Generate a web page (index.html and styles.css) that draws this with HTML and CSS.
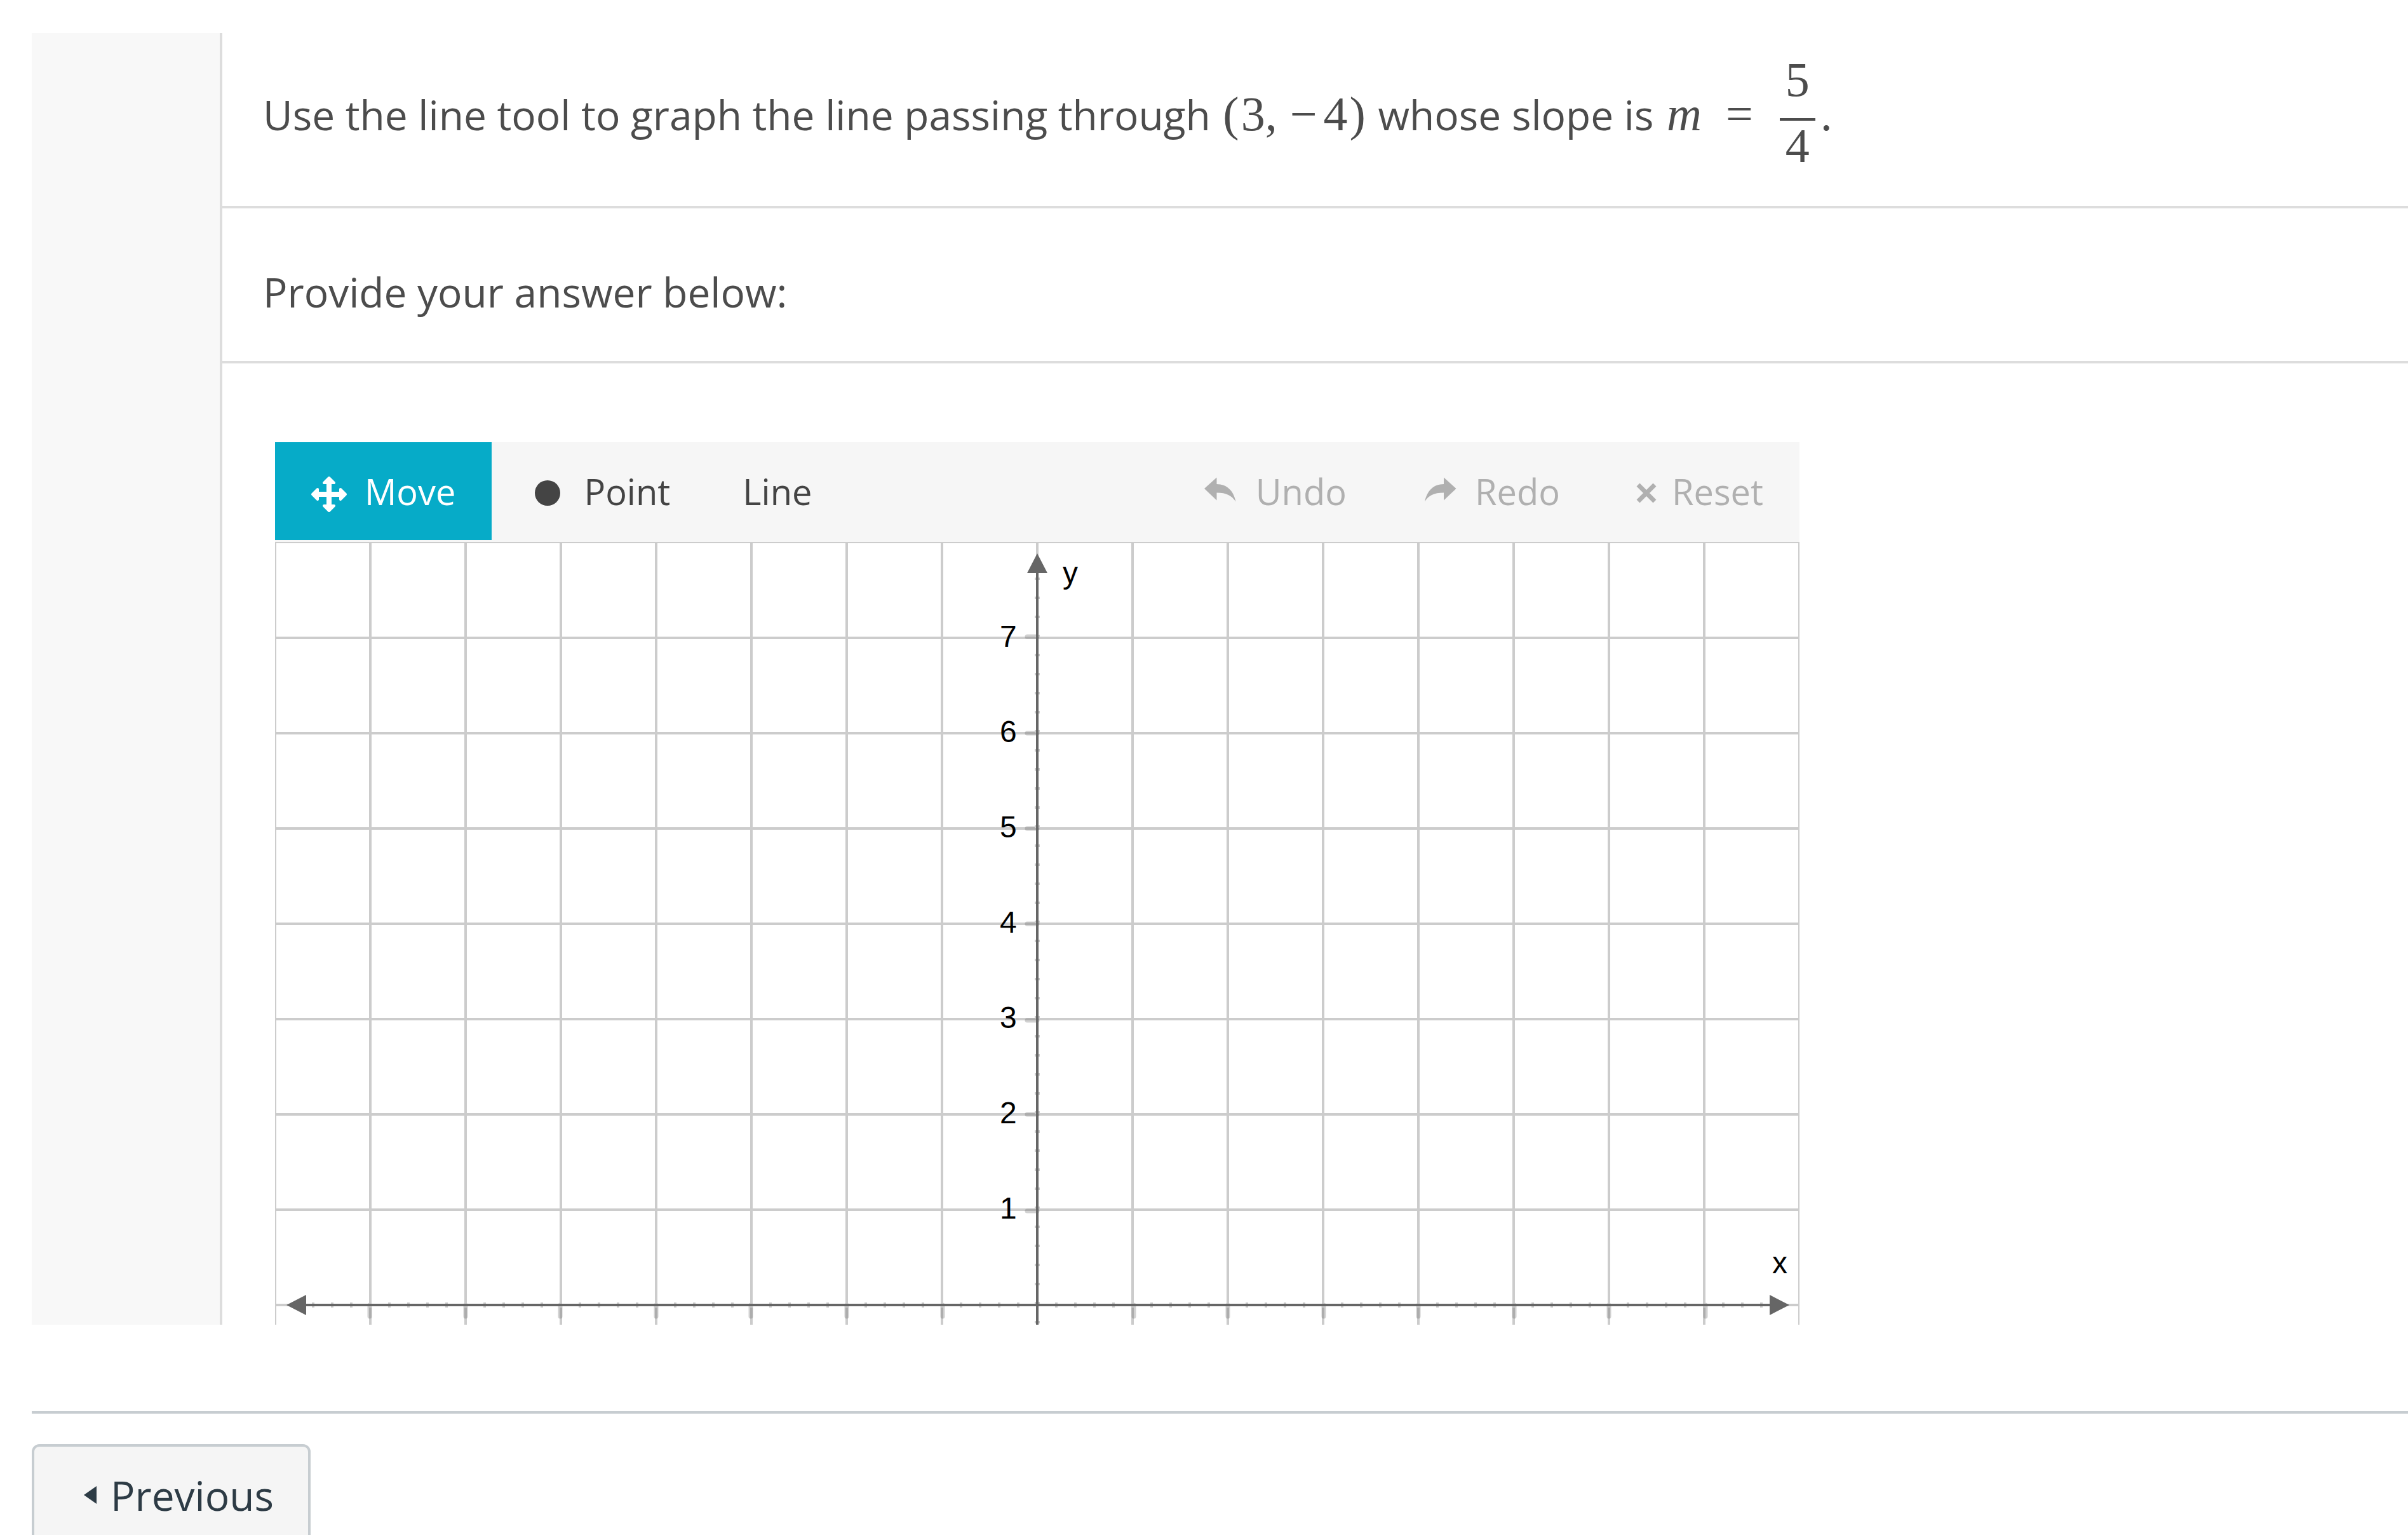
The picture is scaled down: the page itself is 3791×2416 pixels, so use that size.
FILE: index.html
```html
<!DOCTYPE html>
<html lang="en">
<head>
<meta charset="utf-8">
<title>Graph a line</title>
<link rel="stylesheet" href="styles.css">
</head>
<body>
<main class="assessment">
  <aside class="rail"></aside>
  <div class="content">
    <section class="question">
      <p class="prompt">Use the line tool to graph the line passing through <span class="math"><span class="paren">(</span>3,<span class="minus">−</span>4<span class="paren">)</span></span> whose slope is <span class="math"><i class="var">m</i><span class="rel">=</span><span class="frac"><span class="num">5</span><span class="den">4</span></span>.</span></p>
    </section>
    <section class="instruction">
      <p class="prompt">Provide your answer below:</p>
    </section>
    <section class="answer">
      <div class="toolbar">
        <button class="tool active" type="button"><svg class="icon" width="56" height="72" viewBox="0 0 56 72"><path fill="currentColor" transform="translate(0 13) scale(.03125)" d="M1792 896q0 26-19 45l-256 256q-19 19-45 19t-45-19-19-45v-128h-384v384h128q26 0 45 19t19 45-19 45l-256 256q-19 19-45 19t-45-19l-256-256q-19-19-19-45t19-45 45-19h128v-384h-384v128q0 26-19 45t-45 19-45-19l-256-256q-19-19-19-45t19-45l256-256q19-19 45-19t45 19 19 45v128h384v-384h-128q-26 0-45-19t-19-45 19-45l256-256q19-19 45-19t45 19l256 256q19 19 19 45t-19 45-45 19h-128v384h384v-128q0-26 19-45t45-19 45 19l256 256q19 19 19 45z"/></svg>Move</button>
        <button class="tool" type="button"><svg class="icon" width="60" height="72" viewBox="0 0 60 72"><circle cx="31" cy="39" r="20" fill="currentColor"/></svg>Point</button>
        <button class="tool" type="button">Line</button>
        <span class="spacer"></span>
        <button class="tool" type="button" disabled><svg class="icon" width="60" height="72" viewBox="0 0 60 72"><path fill="currentColor" d="M7 32L26.500 14.500V25C42 25 53 35 56.500 52.500C50 43 42 38.500 26.500 38.500V50.500Z"/></svg>Undo</button>
        <button class="tool" type="button" disabled><svg class="icon" width="60" height="72" viewBox="0 0 60 72"><path fill="currentColor" d="M58.500 32L39 14.500V25C23 25 13 35 9 52.500C15 43 23 38.500 39 38.500V50.500Z"/></svg>Redo</button>
        <button class="tool" type="button" disabled><svg class="icon" width="34" height="72" viewBox="0 0 34 72"><path stroke="currentColor" stroke-width="7" d="M9 26L35 52M35 26L9 52"/></svg>Reset</button>
      </div>
      <svg class="graph" viewBox="0 0 2400 1232" role="img" aria-label="Coordinate grid">
        <path class="edge" d="M0 1H2400M1 0V1232M2399 0V1232"/>
        <path class="grid" d="M150 0V1232M300 0V1232M450 0V1232M600 0V1232M750 0V1232M900 0V1232M1050 0V1232M1200 0V1232M1350 0V1232M1500 0V1232M1650 0V1232M1800 0V1232M1950 0V1232M2100 0V1232M2250 0V1232M0 151H2400M0 301H2400M0 451H2400M0 601H2400M0 751H2400M0 901H2400M0 1051H2400M0 1201H2400"/>
        <path class="major" d="M149 1201V1219M300 1201V1219M449 1201V1219M600 1201V1219M749 1201V1219M900 1201V1219M1051 1201V1219M1352 1201V1219M1500 1201V1219M1651 1201V1219M1800 1201V1219M1951 1201V1219M2100 1201V1219M2252 1201V1219M1184 149H1200M1184 301H1200M1184 451H1200M1184 601H1200M1184 753H1200M1184 901H1200M1184 1053H1200"/>
        <path class="minor" d="M58 1201H2350M1200 56V1232"/>
        <path class="axis" d="M48 1201H2354M1200 48V1232"/>
        <path class="arrow" d="M18 1201L49 1185V1217ZM2384 1201L2353 1185V1217ZM1200 18L1184 49H1216Z"/>
        <g class="labels">
          <text x="1240" y="65">y</text>
          <text x="2357" y="1151">x</text>
          <text x="1141" y="165">7</text>
          <text x="1141" y="315">6</text>
          <text x="1141" y="465">5</text>
          <text x="1141" y="615">4</text>
          <text x="1141" y="765">3</text>
          <text x="1141" y="915">2</text>
          <text x="1141" y="1065">1</text>
        </g>
      </svg>
    </section>
  </div>
</main>
<footer class="pager">
  <button class="previous" type="button"><svg width="20" height="28" viewBox="0 0 20 28"><path fill="currentColor" d="M0 14L20 0V28Z"/></svg>Previous</button>
</footer>
</body>
</html>
```
FILE: styles.css
```css
* {
  box-sizing: border-box;
}

body {
  height: 100vh;
  margin: 0;
  padding: 52px 0 0 50px;
  overflow: hidden;
  background: #fff;
  color: #4c4c4c;
  font-family: "Open Sans", "Noto Sans", sans-serif;
}

.assessment {
  display: flex;
}

.rail {
  flex: 0 0 300px;
  border-right: 4px solid #ddd;
  background: #f8f8f8;
}

.content {
  flex: 1;
  min-width: 0;
}

.question,
.instruction {
  display: flex;
  align-items: center;
  padding-left: 64px;
  border-bottom: 4px solid #ddd;
}

.question {
  height: 276px;
}

.instruction {
  height: 244px;
  padding-top: 24px;
}

.prompt {
  margin: 0;
  font-size: 64px;
  line-height: 88px;
  white-space: nowrap;
}

.math {
  font-family: "Liberation Serif", serif;
  font-size: 76px;
  line-height: 80px;
}

.paren {
  margin: 0 3px;
}

.minus {
  margin: 0 10px 0 20px;
}

.var {
  margin: 0 38px 0 4px;
}

.rel {
  margin-right: 42px;
}

.frac {
  display: inline-flex;
  flex-direction: column;
  align-items: center;
  width: 56px;
  margin-right: 8px;
  vertical-align: middle;
}

.num {
  line-height: 122px;
}

.den {
  width: 100%;
  height: 126px;
  border-top: 4px solid;
  line-height: 78px;
  text-align: center;
}

.answer {
  max-width: 2483px;
  padding: 124px 0 0 83px;
}

.toolbar {
  display: flex;
  align-items: flex-start;
  height: 157px;
  background: #f6f6f6;
}

.tool {
  display: flex;
  align-items: center;
  gap: 28px;
  height: 154px;
  padding: 0 57px;
  border: 0;
  background: none;
  color: #444;
  font: 56px "Open Sans", "Noto Sans", sans-serif;
}

.tool.active {
  background: #06abc8;
  color: #fff;
}

.tool:disabled {
  color: #b0b0b0;
}

.icon {
  overflow: visible;
}

.spacer {
  flex: 1;
}

.graph {
  display: block;
  width: 100%;
  height: auto;
}

.edge {
  fill: none;
  stroke: #ccc;
  stroke-width: 2;
}

.grid {
  fill: none;
  stroke: #ccc;
  stroke-width: 4;
}

.major {
  fill: none;
  stroke: #666;
  stroke-linecap: round;
  stroke-opacity: .3;
  stroke-width: 7;
}

.minor {
  fill: none;
  stroke: #ccc;
  stroke-dasharray: 4 26;
  stroke-width: 8;
}

.axis {
  fill: none;
  stroke: #666;
  stroke-width: 4;
}

.arrow {
  fill: #666;
}

.labels {
  fill: #000;
  font: 48px "Liberation Sans", Arial, sans-serif;
}

.pager {
  margin-top: 136px;
  padding-top: 48px;
  border-top: 4px solid #c7cdd1;
}

.previous {
  display: flex;
  align-items: center;
  gap: 22px;
  height: 160px;
  padding: 0 54px 0 78px;
  border: 4px solid #c7cdd1;
  border-radius: 12px;
  background: #f5f5f5;
  color: #2d3b45;
  font: 64px "Open Sans", "Noto Sans", sans-serif;
}
```
